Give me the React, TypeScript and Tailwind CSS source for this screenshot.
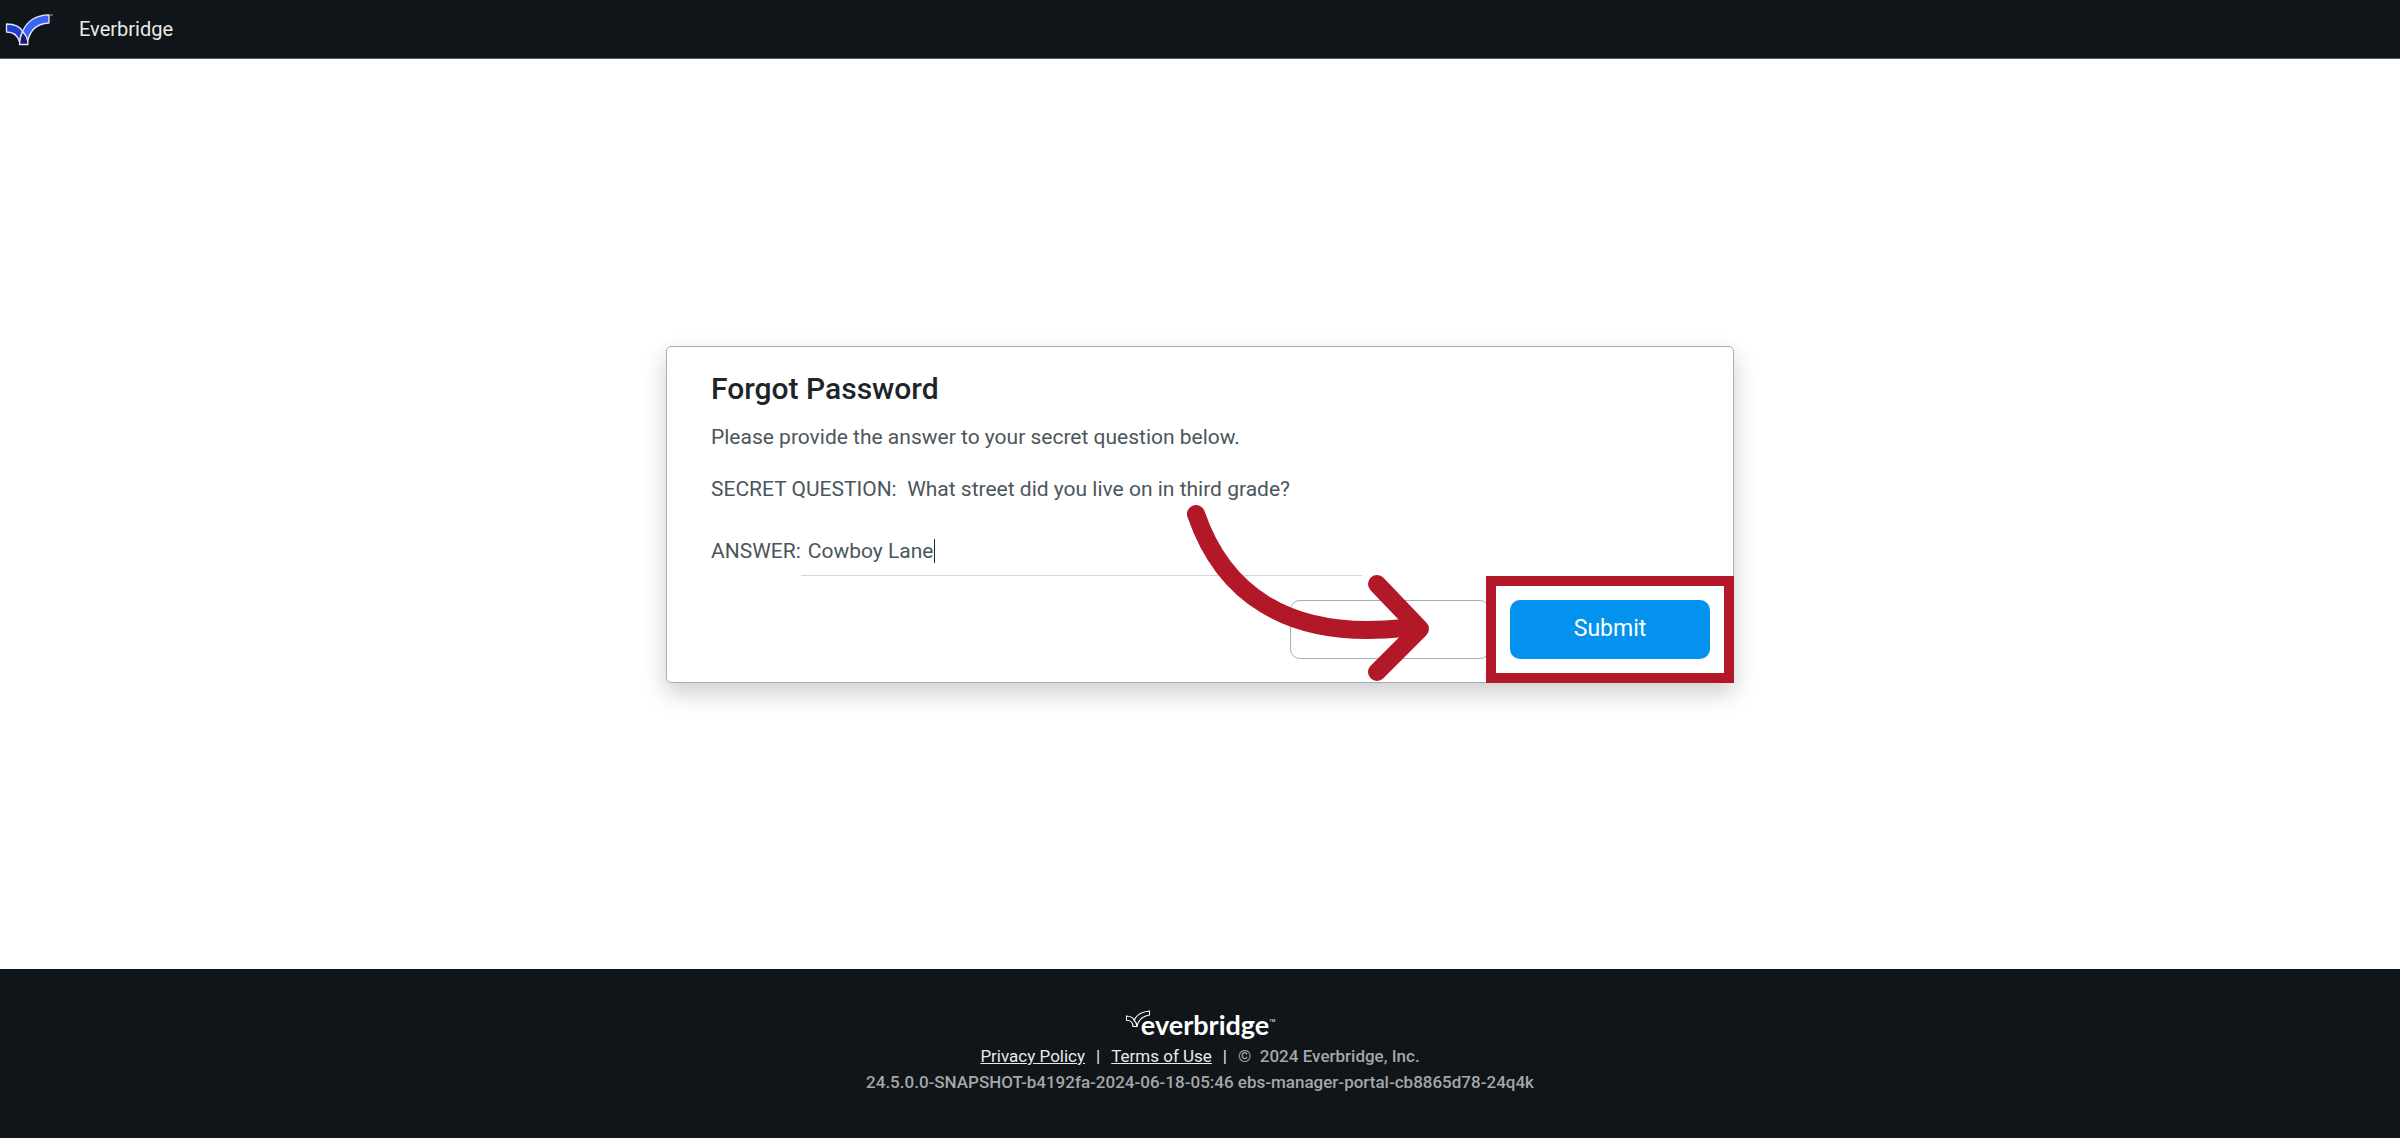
import { useState } from "react"

function Header() {
    return (
        <header className="flex h-[59px] items-center border-b border-[#5b6063] bg-[#0f1518]">
            {/* logo */}
            <svg className="ml-1 h-10 w-[52px]" viewBox="0 0 52 40" strokeLinejoin="round" aria-hidden="true">
                <path d="M2.5 15 C10 15 16 17.5 18.5 22.5 C16.5 26 16 29 15.5 33 C14 27 10 23 2.5 23 Z" fill="#1f3fd0" stroke="#e3e7f2" strokeWidth="1.3" />
                <path d="M18.5 22.5 C23 12 32 6 45 5.8 V14 C34 14.5 26 20 23.5 33 C22.5 28 21 25 18.5 22.5 Z" fill="#3c63f5" stroke="#e3e7f2" strokeWidth="1.3" />
                <path d="M18.5 22.5 C16.5 27 15.5 30 15.5 35.5 H24 C24 30 22 26 18.5 22.5 Z" fill="#1b1a72" stroke="#e3e7f2" strokeWidth="1.3" />
                <path d="M46 6 H49" stroke="#7d8286" strokeWidth="1.3" />
            </svg>
            <span className="ml-[23px] text-[20px] text-[#e8eaeb]">Everbridge</span>
        </header>
    )
}

function ArrowPointer() {
    return (
        <svg
            className="pointer-events-none absolute right-[302px] bottom-0 h-[178px] w-[244px]"
            viewBox="1187 506 244 178"
            fill="none"
            stroke="#b31829"
            strokeWidth="18"
            strokeLinecap="round"
            strokeLinejoin="round"
            aria-hidden="true"
        >
            <path d="M1196 516 C1222 592 1284 643 1404 630" />
            <path d="M1377 586 L1420 631 L1377 674" />
        </svg>
    )
}

function ForgotPasswordForm() {
    const [answer, setAnswer] = useState("Cowboy Lane")

    return (
        <form
            className="relative w-full max-w-[1068px] rounded-[5px] border border-[#9eb0b9] bg-white pt-[22px] pr-[23px] pb-[23px] pl-11 text-[21px] text-[#4b565c] shadow-[0_10px_24px_rgba(0,0,0,0.2)]"
            onSubmit={(e) => e.preventDefault()}
        >
            <h1 className="text-[30px] leading-10 font-medium text-[#1d2529]">Forgot Password</h1>
            <p className="mt-3 leading-8">Please provide the answer to your secret question below.</p>
            <p className="mt-5 leading-8 whitespace-pre">SECRET QUESTION:  What street did you live on in third grade?</p>

            <div className="mt-[23px] flex items-center">
                <label htmlFor="answer">ANSWER:</label>
                <div className="relative">
                    <input
                        id="answer"
                        type="text"
                        value={answer}
                        onChange={(e) => setAnswer(e.target.value)}
                        className="h-12 w-[561px] border-b border-[#cdd7dc] px-[7px] outline-none"
                    />
                    <span className="absolute top-[11px] left-[133px] h-6 w-px bg-[#1d2529]" />
                </div>
            </div>

            <div className="mt-6 flex justify-end gap-5">
                <button type="button" className="h-[59px] w-[200px] rounded-[10px] border border-[#9eb0b9] bg-white text-[22px]">
                    Cancel
                </button>
                <div className="relative">
                    <button type="submit" className="h-[59px] w-[200px] rounded-[10px] bg-[#0392ee] text-[23px] text-white">
                        Submit
                    </button>
                    <div className="pointer-events-none absolute -inset-x-6 -inset-y-6 border-[10px] border-[#b31829]" />
                </div>
            </div>
            <ArrowPointer />
        </form>
    )
}

function Footer() {
    return (
        <footer className="flex h-[169px] flex-col items-center bg-[#0f1518] pt-[38px] text-[17px] text-[#aeb1b3]">
            {/* wordmark */}
            <div className="flex h-9 items-center text-white">
                <svg className="mb-3 h-5 w-[26px]" viewBox="0 0 52 40" fill="none" stroke="#fff" strokeWidth="2.2" aria-hidden="true">
                    <path d="M3 14 C10 14 16 17 18.5 23 C22 12 32 6 49 4 V12 C36 14 27 20 24 35 H16 C16 27 11 22.5 3 22.5 Z" />
                    <path d="M18.5 23 C22 26 24 30 24 35" />
                </svg>
                <span className="-ml-[10px] font-['Lato',sans-serif] text-[27px] font-bold">everbridge</span>
                <span className="mb-2 text-[4px]">TM</span>
            </div>
            <div className="flex gap-[11px] leading-[26px] text-[#e8eaeb]">
                <a href="#privacy" className="underline">Privacy Policy</a>
                <span>|</span>
                <a href="#terms" className="underline">Terms of Use</a>
                <span>|</span>
                <span className="font-medium whitespace-pre text-[#a4a7a9]">{"©  2024 Everbridge, Inc."}</span>
            </div>
            <p className="leading-[26px] font-medium text-[#a4a7a9]">24.5.0.0-SNAPSHOT-b4192fa-2024-06-18-05:46 ebs-manager-portal-cb8865d78-24q4k</p>
        </footer>
    )
}

export default function App() {
    return (
        <div className="flex min-h-screen flex-col bg-white font-['Roboto',sans-serif]">
            <Header />
            <main className="flex flex-1 items-center justify-center">
                <ForgotPasswordForm />
            </main>
            <Footer />
        </div>
    )
}
